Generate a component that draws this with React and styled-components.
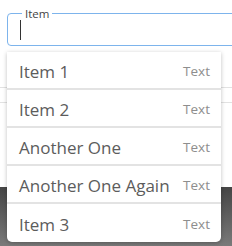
import styled, { createGlobalStyle } from "styled-components";

const GlobalStyle = createGlobalStyle`
  html, body {
    margin: 0;
    padding: 0;
    background: #fff;
    font-family: "Open Sans", "Noto Sans", sans-serif;
  }
`;

const items = [
  { label: "Item 1", hint: "Text" },
  { label: "Item 2", hint: "Text" },
  { label: "Another One", hint: "Text" },
  { label: "Another One Again", hint: "Text" },
  { label: "Item 3", hint: "Text" },
];

function App() {
  return (
    <Page>
      <GlobalStyle />
      <FieldWrap>
        <Fieldset>
          <Legend>Item</Legend>
          <Caret />
        </Fieldset>
        <Menu>
          {items.map((e, i) => (
            <Option key={i} last={i === items.length - 1}>
              <Label>{e.label}</Label>
              <Hint>{e.hint}</Hint>
            </Option>
          ))}
        </Menu>
      </FieldWrap>
      <Behind>
        <Line />
        <Line />
      </Behind>
      <Dark />
    </Page>
  );
}

var Page = styled.div`
    width: 232px;
    height: 246px;
    overflow: hidden;
    display: flex;
    flex-direction: column;
    background: #fff;
  `,
  FieldWrap = styled.div`
    position: relative;
    padding: 7px 0 0 7px;
    z-index: 2;
  `,
  Fieldset = styled.fieldset`
    margin: 0;
    height: 39px;
    box-sizing: border-box;
    width: 240px;
    border: 1px solid #7db4ec;
    border-radius: 4px;
    padding: 0 0 0 12px;
    display: flex;
    align-items: center;
  `,
  Legend = styled.legend`
    font-size: 11.5px;
    color: #444;
    padding: 0 3px;
    margin-left: 2px;
    line-height: 13px;
  `,
  Caret = styled.div`
    width: 1px;
    height: 20px;
    background: #333;
    margin-top: -6px;
  `,
  Menu = styled.div`
    position: absolute;
    left: 7px;
    top: 52px;
    width: 214px;
    background: #fff;
    border-radius: 0 0 5px 5px;
    box-shadow: 0 1px 4px rgba(0, 0, 0, 0.25);
    overflow: hidden;
  `,
  Option = styled.div`
    height: 38px;
    box-sizing: border-box;
    display: flex;
    align-items: center;
    justify-content: space-between;
    padding: 2px 11px 0 12px;
    border-bottom: ${(p) => (p.last ? "none" : "2px solid #e3e3e3")};
  `,
  Label = styled.span`
    font-size: 17px;
    color: #5c5c5c;
  `,
  Hint = styled.span`
    font-size: 13.5px;
    color: #8e8e8e;
  `,
  Behind = styled.div`
    margin-top: 41px;
    display: flex;
    flex-direction: column;
    gap: 14px;
  `,
  Line = styled.div`
    height: 1px;
    background: #e2e2e2;
  `,
  Dark = styled.div`
    margin-top: 84px;
    flex: 1;
    background: linear-gradient(#454545, #7a7a7a);
  `;

export default App;
